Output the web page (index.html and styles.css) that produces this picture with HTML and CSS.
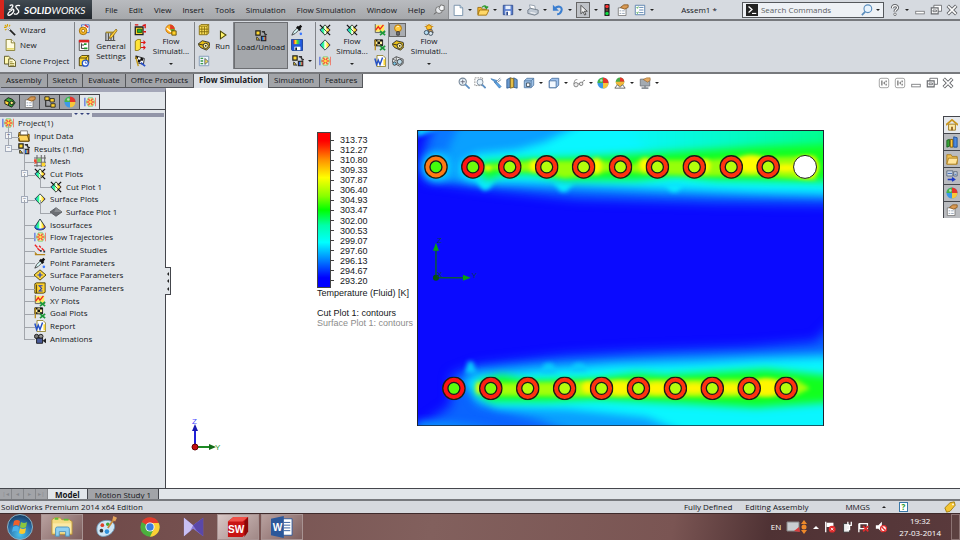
FILE: index.html
```html
<!DOCTYPE html>
<html lang="en">
<head>
  <meta charset="UTF-8">
  <meta name="viewport" content="width=device-width, initial-scale=1.0">
  <title>SolidWorks - Assem1</title>
  <link rel="stylesheet" href="styles.css">
</head>
<body>
  <svg class="sprite" aria-hidden="true">
    <defs>
      <linearGradient id="g-rainbow" x1="0" y1="0" x2="1" y2="0">
        <stop offset="0" stop-color="#e22"/><stop offset=".3" stop-color="#fd2"/><stop offset=".6" stop-color="#3d4"/><stop offset="1" stop-color="#26f"/>
      </linearGradient>
      <linearGradient id="g-rain2" x1="0" y1="0" x2="1" y2="0">
        <stop offset="0" stop-color="#19f"/><stop offset=".35" stop-color="#3f8"/><stop offset=".5" stop-color="#fff"/><stop offset=".75" stop-color="#fe3"/><stop offset="1" stop-color="#e33"/>
      </linearGradient>
    </defs>
    <symbol id="i-wand" viewBox="0 0 14 14"><path d="M5 5l8 8" stroke="#222" stroke-width="2"/><path d="M4 0v3M0 4h3M1 1l2 2M7 1L6 3M1 7l2-1" stroke="#d9a400" stroke-width="1.3"/><path d="M5 5l2 2" stroke="#fff" stroke-width="1.4"/></symbol>
    <symbol id="i-new" viewBox="0 0 14 14"><path d="M2.500.5h6l4 4v9h-10z" fill="#fffce0" stroke="#7d7320"/><path d="M8.500.5v4h4" fill="#fff" stroke="#7d7320"/><path d="M3.500 11.500h8" stroke="#e8dc70" stroke-width="2"/></symbol>
    <symbol id="i-clone" viewBox="0 0 14 14"><path d="M.5 1.500h5l3 3v6h-8z" fill="#fff8b0" stroke="#4c4512"/><path d="M5.500 4.500h5l3 3v6h-8z" fill="#fffbd0" stroke="#4c4512"/><path d="M7 8h3M7 10h5M7 12h5" stroke="#8c8020"/></symbol>
    <symbol id="i-gearpage" viewBox="0 0 14 14"><path d="M4 1h9v9H6z" fill="#fff" stroke="#3a64c4"/><circle cx="6" cy="8" r="4.500" fill="#f3b52a" stroke="#a06a00"/><circle cx="6" cy="8" r="1.700" fill="#fff" stroke="#a06a00"/><path d="M8 1l4 3" stroke="#d33" stroke-width="2"/></symbol>
    <symbol id="i-treepage" viewBox="0 0 14 14"><path d="M1.500 1.500h11v12h-11z" fill="#fff" stroke="#444"/><path d="M1 1h12v3H1z" fill="#d22"/><path d="M4 5v6h3M4 7h3" stroke="#222" fill="none"/><path d="M7 5h3v2H7zM7 10h4v2H7z" fill="#1a9a2a"/></symbol>
    <symbol id="i-cube" viewBox="0 0 14 14"><path d="M1.500 3.500l3-3h8v9l-3 3h-8z" fill="#ffd72e" stroke="#3d3200"/><path d="M1.500 3.500h8v9M9.500 3.500l3-3" fill="none" stroke="#3d3200"/><circle cx="8.500" cy="9.500" r="3.500" fill="#fff" stroke="#2455c8" stroke-width="1.500"/><path d="M8.500 7.500v2h2" stroke="#2455c8" fill="none"/></symbol>
    <symbol id="i-genset" viewBox="0 0 14 14"><path d="M1 4v9M4 4v9M7 4v9M10 4v9M0 13.500h12" stroke="#555" stroke-width="1.400"/><path d="M1 4h10" stroke="#a88e2c" stroke-width="2"/><path d="M13 0L6 8l-1 3 3-1 6-8z" fill="#ffcf3d" stroke="#7a5600" stroke-width=".8"/></symbol>
    <symbol id="i-greenbox" viewBox="0 0 14 14"><path d="M1.500 3.500h9v9h-9z" fill="#ffd72e" stroke="#222" stroke-width="1.500"/><path d="M4 6h5v4H4z" fill="#20b030" stroke="#145c18"/><path d="M1 1h4M10 2l3-1v4M11 9h3" stroke="#d11" stroke-width="1.600" fill="none"/></symbol>
    <symbol id="i-flowbox" viewBox="0 0 14 14"><path d="M1.500 2.500l3-2h3v11l-3 2h-3z" fill="#ffe338" stroke="#8a7200"/><path d="M8 4h5M8 10h5M11 2l2 2-2 2M11 8l2 2-2 2" stroke="#e21515" stroke-width="1.200" fill="none"/></symbol>
    <symbol id="i-flag" viewBox="0 0 14 14"><path d="M2 1l10 3-1 7-7-2" fill="#fff" stroke="#111"/><path d="M2 1l3 1-1 3-3-1zM8 3l3 1-1 3-3-1zM5 5l3 1-1 3-3-1z" fill="#111"/><path d="M2 2l3 11" stroke="#c59a16" stroke-width="1.600"/><path d="M8 9l5 4" stroke="#2950c8" stroke-width="2"/></symbol>
    <symbol id="i-flowsim" viewBox="0 0 14 14"><circle cx="6" cy="6" r="5" fill="#ffb52b" stroke="#c26a00"/><path d="M6 1a5 5 0 0 1 5 5H6z" fill="#e33a24"/><path d="M6 6h5a5 5 0 0 1-2 4z" fill="#3aa83a"/><path d="M8 8h5v5H8z" fill="#ffcf2a" stroke="#5e4900"/><path d="M2 5l5 4" stroke="#fff" stroke-width="1.400"/></symbol>
    <symbol id="i-grid" viewBox="0 0 14 14"><path d="M1.500 2.500l2-2h9v10l-2 2h-9z" fill="#ffe35a" stroke="#80680a"/><path d="M1.500 2.500h9v10M10.500 2.500l2-2M4.500 3v9M7.500 3v9M2 6h10M2 9h10" fill="none" stroke="#80680a"/></symbol>
    <symbol id="i-nut" viewBox="0 0 14 14"><path d="M0 6l5-4 8 2 1 5-4 4-7-3z" fill="#e8bf1a" stroke="#222"/><circle cx="9" cy="8" r="3" fill="#fff3a8" stroke="#222"/><circle cx="9" cy="8" r="1" fill="#222"/><path d="M1 6l5 1" stroke="#222"/></symbol>
    <symbol id="i-solve" viewBox="0 0 14 14"><path d="M1.500 1.500h11v11h-11z" fill="#eef5fb" stroke="#7a95b4"/><path d="M3 4h3M3 7h3M3 10h3" stroke="#3a9a48" stroke-width="1.500"/><path d="M8 4l4 3.500L8 11z" fill="#f3dc53" stroke="#54606c"/></symbol>
    <symbol id="i-run" viewBox="0 0 14 14"><path d="M4 2.500l6.500 4.500L4 11.500z" fill="#fff36a" stroke="#4b4500" stroke-width="1.200"/></symbol>
    <symbol id="i-load" viewBox="0 0 14 14"><path d="M1 1h5v5H1z" fill="#ffd72e" stroke="#222" stroke-width="1.400"/><path d="M8 2h3v3" fill="#e8e8e8" stroke="#333" stroke-width="1.400"/><path d="M8 2c3 0 4 1 4 4l2-1M6 12c-3 0-4-1-4-3" stroke="#333" fill="none" stroke-width="1.300"/><path d="M2 8l3 3-3 1z" fill="#ffd72e" stroke="#333"/><path d="M7.500 7.500h5v5h-5z" fill="#fff" stroke="#222" stroke-width="1.400"/><path d="M8 8h2v4H8z" fill="#2a5cdf"/><path d="M10 8h1v4h-1z" fill="#2bc83a"/><path d="M11 8h1v4h-1z" fill="#e22"/></symbol>
    <symbol id="i-dropper" viewBox="0 0 14 14"><path d="M1 13l2-4 5-5 2 2-5 5z" fill="#dff" stroke="#333"/><path d="M7 3l4 4M9 5l3-3" stroke="#111" stroke-width="3"/><circle cx="11.500" cy="11.500" r="1.500" fill="#3a78ff"/></symbol>
    <symbol id="i-disk" viewBox="0 0 14 14"><path d="M.5.5h13v13h-12l-1-1z" fill="#2058d8" stroke="#143a92"/><path d="M3 1h8v5H3z" fill="url(#g-rainbow)"/><path d="M4 9h7v4H4z" fill="#fff"/><path d="M5 10h2v3H5z" fill="#123"/></symbol>
    <symbol id="i-diamond" viewBox="0 0 14 14"><path d="M7 1l6 6-6 6-6-6z" fill="url(#g-rain2)" stroke="#234"/></symbol>
    <symbol id="i-cut" viewBox="0 0 14 14"><path d="M7 1l6 6-6 6-6-6z" fill="url(#g-rain2)" stroke="#222"/><path d="M1 1l4 4M13 1L9 5M9 9l4 4" stroke="#111" stroke-width="1.400" fill="none"/><path d="M5 5l4 4" stroke="#333"/></symbol>
    <symbol id="i-surf" viewBox="0 0 14 14"><path d="M7 2l7 5-7 5-7-5z" fill="#6b6e73" stroke="#55585c"/><path d="M7 2l7 5H5z" fill="#8a8d91"/></symbol>
    <symbol id="i-fan" viewBox="0 0 14 14"><path d="M1 2v10" stroke="#5a74dd" fill="none" stroke-width="1.500"/><path d="M5 2h5l3 5-3 5H5L2.500 7z" fill="#f7e58c" stroke="#7bd68b"/><path d="M5 3l5 8M10 3L5 11M3 7h9" stroke="#f25a3c" stroke-width="1.700"/><circle cx="7.500" cy="7" r="1.600" fill="#ffe23a"/><path d="M13.500 2v10" stroke="#f26a5a"/></symbol>
    <symbol id="i-folder" viewBox="0 0 14 14"><path d="M1 3h5l1 2h6v8H1z" fill="#f7b62a" stroke="#4f3500"/><path d="M3 1h8v5H3z" fill="#fff" stroke="#777"/><path d="M0 6h11l2 7H2z" fill="#ffd45c" stroke="#4f3500"/></symbol>
    <symbol id="i-mesh" viewBox="0 0 14 14"><path d="M3.500 0v14M8.500 0v14M12.500 0v14M0 3.500h14M0 8.500h14M0 12.500h14" stroke="#666" stroke-width="1.200"/><path d="M0 5h3v5H0z" fill="#f04a30"/><path d="M9 9h4v4H9z" fill="#ffd52e"/><path d="M4 4h4v4H4z" fill="#71d05a"/></symbol>
    <symbol id="i-iso" viewBox="0 0 14 14"><path d="M7 0l6 9c1 5-13 5-12 0z" fill="url(#g-rain2)" stroke="#123"/><path d="M1 9c2 3 10 3 12 0-1 5-11 5-12 0z" fill="#2046d8"/></symbol>
    <symbol id="i-particle" viewBox="0 0 14 14"><path d="M1 1l3 3M4 5l3 3M6 2l2 2M9 5l3 3" stroke="#e22" stroke-width="1.600"/><path d="M7 8h2M11 9h2" stroke="#234" stroke-width="2"/><path d="M1 12.500h12M1 10l2 2" stroke="#b5861e" stroke-width="1.500"/></symbol>
    <symbol id="i-sparam" viewBox="0 0 14 14"><path d="M7 1l7 6-7 6-7-6z" fill="#ffd93c" stroke="#3d3200"/><path d="M4 7h6M7 4v6" stroke="#1c3ac8" stroke-width="1.400"/></symbol>
    <symbol id="i-vparam" viewBox="0 0 14 14"><path d="M1 2l2-1h10v11l-2 1H1z" fill="#ffd22e" stroke="#3d3200"/><path d="M3 3v10" stroke="#3d3200"/><path d="M10 4.500H6l3 3-3 3h4" stroke="#1c3ac8" fill="none" stroke-width="1.200"/></symbol>
    <symbol id="i-xy" viewBox="0 0 14 14"><path d="M1 1h11v8H1z" fill="#ffe95e"/><path d="M1.500 0v10H13" stroke="#555" fill="none"/><path d="M2 7l3-4 2 3 4-5" stroke="#e22" fill="none" stroke-width="1.500"/><path d="M7 8l6 5M13 8l-6 5" stroke="#1d9a3a" stroke-width="2"/></symbol>
    <symbol id="i-goal" viewBox="0 0 14 14"><path d="M1 1h9v7H1z" fill="#fff2a0" stroke="#111"/><path d="M1 1h3v2H1zM7 1h3v2H7zM4 3h3v3H4zM1 6h3v2H1zM7 6h3v2H7z" fill="#111"/><path d="M1.500 1v12" stroke="#b58a14" stroke-width="1.500"/><path d="M7 8l6 5M13 8l-6 5" stroke="#1d9a3a" stroke-width="2"/></symbol>
    <symbol id="i-report" viewBox="0 0 14 14"><path d="M3.500.5h7l3 3v10h-10z" fill="#fff" stroke="#8a7a20"/><path d="M1 4l2 7 2-5 2 5 3-8" stroke="#2450c4" fill="none" stroke-width="1.700"/><path d="M12 5v7" stroke="#ffd93c" stroke-width="2"/></symbol>
    <symbol id="i-anim" viewBox="0 0 14 14"><circle cx="3" cy="4" r="2.500" fill="#777" stroke="#111"/><circle cx="8" cy="4" r="2.500" fill="#999" stroke="#111"/><path d="M3 6h7v6H3z" fill="#4b5d9a" stroke="#111"/><path d="M10 9l4-3v6z" fill="#222"/></symbol>
    <symbol id="i-bulb" viewBox="0 0 14 14"><circle cx="7" cy="5" r="4" fill="#ffc93c" stroke="#b06f00"/><path d="M5 4q1-2 3-1" stroke="#fff" fill="none"/><path d="M5.500 9h3v4h-3z" fill="#777" stroke="#333"/></symbol>
    <symbol id="i-wire" viewBox="0 0 14 14"><path d="M0 5l5-3 8 3v5l-4 3-8-4z" fill="#e7ebee" stroke="#444"/><circle cx="9" cy="8" r="3" fill="#bcd9e8" stroke="#333"/><path d="M1 5l5 2M5 2v4" stroke="#555"/><circle cx="3" cy="10" r="2" fill="#7cc7e8" stroke="#333"/></symbol>
    <symbol id="i-flowdisp" viewBox="0 0 14 14"><circle cx="7" cy="4" r="3" fill="#ffc22c" stroke="#b87300"/><path d="M7 0v1M2 3h2M10 3h2M3 0l1 1M11 0l-1 1" stroke="#c98500"/><path d="M6 7l4-1 2 4-5 2z" fill="#c7964e" stroke="#555"/><circle cx="4" cy="10" r="2.500" fill="#b5dcf2" stroke="#345"/><circle cx="9" cy="11" r="2.300" fill="#dce8ef" stroke="#345"/></symbol>
    <symbol id="i-pin" viewBox="0 0 14 14"><path d="M1 12l4-3" stroke="#555"/><circle cx="7" cy="7" r="4" fill="#e8eaed" stroke="#666"/><path d="M7 5l2-4 4 1v5l-4 1z" fill="#f4f5f7" stroke="#666"/></symbol>
    <symbol id="i-doc" viewBox="0 0 14 14"><path d="M2.500 1.500h7l3 3v9h-10z" fill="#fff" stroke="#6f8aa5"/><path d="M9.500 1.500v3h3" fill="#d9e7f4" stroke="#6f8aa5"/></symbol>
    <symbol id="i-open" viewBox="0 0 14 14"><path d="M1 4h4l1 2h5v6H1z" fill="#f5b62e" stroke="#9c6d0c"/><path d="M3 7h11l-3 6H1z" fill="#ffd868" stroke="#9c6d0c"/><path d="M6 4c2-3 5-2 5 0M9 3l2 2 2-2" stroke="#2a9a2a" stroke-width="1.500" fill="none"/></symbol>
    <symbol id="i-files" viewBox="0 0 14 14"><path d="M1 2h5l1 2h6v9H1z" fill="#f0c050" stroke="#a87c20"/><path d="M3 6h11l-2 7H1z" fill="#ffe49a" stroke="#a87c20"/></symbol>
    <symbol id="i-save" viewBox="0 0 14 14"><path d="M1.500 1.500h11v11h-11z" fill="#5b7fcf" stroke="#2d4b8e"/><path d="M4 2h6v4H4z" fill="#e8f0fc"/><path d="M4 8h6v5H4z" fill="#fff"/><path d="M5 9h2v4H5z" fill="#2d4b8e"/></symbol>
    <symbol id="i-print" viewBox="0 0 14 14"><path d="M3 1l6 1 1 5-6-1z" fill="#fff" stroke="#8c98a6"/><path d="M1 7l3-2 9 2v4l-4 2-8-2z" fill="#bfc8d3" stroke="#6c7784"/><path d="M4 10l6 1" stroke="#fff"/></symbol>
    <symbol id="i-undo" viewBox="0 0 14 14"><path d="M3 6c3-5 10-3 8 2-.7 2-3 4-5 4" stroke="#3c7fd0" stroke-width="2.400" fill="none"/><path d="M1 1v7h7z" fill="#3c7fd0"/></symbol>
    <symbol id="i-arrow" viewBox="0 0 14 14"><path d="M4.500 1.500v10l2.500-2.500 2 4 1.500-1-2-3.500h3.500z" fill="#eee" stroke="#444"/></symbol>
    <symbol id="i-light" viewBox="0 0 14 14"><rect x="4" y="0" width="6" height="14" rx="1" fill="#222"/><circle cx="7" cy="3" r="2" fill="#f33"/><circle cx="7" cy="7" r="1.500" fill="#643"/><circle cx="7" cy="11" r="2" fill="#1d4"/></symbol>
    <symbol id="i-prop" viewBox="0 0 14 14"><path d="M1.500 4.500h9v9h-9z" fill="#fff" stroke="#777"/><path d="M3 8h2M3 11h2M6 8h3M6 11h3" stroke="#8a9ab0"/><path d="M4 4l4-3h5v3l-4 2z" fill="#d99a54" stroke="#8a5a22"/></symbol>
    <symbol id="i-list" viewBox="0 0 14 14"><path d="M1.500 1.500h11v11h-11z" fill="#fff" stroke="#4f7aa8"/><path d="M3 4l1 1 1-2M3 10l1 1 1-2" stroke="#2a9a2a" fill="none"/><path d="M6 4h5M6 7h5M6 10h5" stroke="#4f7aa8"/></symbol>
    <symbol id="i-mag" viewBox="0 0 14 14"><circle cx="5.500" cy="5.500" r="4.200" fill="#eaf4fb" stroke="#778899" stroke-width="1.300"/><path d="M8.500 8.500l5 5" stroke="#5b8fc4" stroke-width="2"/><path d="M5.500 3v5M3 5.500h5" stroke="#667"/></symbol>
    <symbol id="i-magarea" viewBox="0 0 14 14"><path d="M1 1h9v9H1z" fill="none" stroke="#888" stroke-dasharray="2 1"/><circle cx="7" cy="6" r="3.500" fill="#eaf4fb" stroke="#778899"/><path d="M9.500 9l4 4" stroke="#5b8fc4" stroke-width="2"/></symbol>
    <symbol id="i-find" viewBox="0 0 14 14"><circle cx="8" cy="5.500" r="4.500" fill="#e8f3fd" stroke="#5a8dbd" stroke-width="1.300"/><path d="M5 9l-4 4" stroke="#5a8dbd" stroke-width="2"/></symbol>
    <symbol id="i-prev" viewBox="0 0 14 14"><path d="M1 2l7 2-1 3zM5 6l6 7 2-2-6-6z" fill="#5ea4e4" stroke="#2c6cab" stroke-width=".7"/><path d="M8 5l4-4M9 6l4-3" stroke="#789"/></symbol>
    <symbol id="i-section" viewBox="0 0 14 14"><path d="M1 3l4-2v11l-4 1zM9 1l4 2v10l-4-1z" fill="#6c9bd0" stroke="#2f5c92"/><path d="M5 1l4 1v10l-4 1z" fill="#e5bf48" stroke="#776022"/></symbol>
    <symbol id="i-view" viewBox="0 0 14 14"><path d="M1.500 4.500l3-3h8v8l-3 3h-8z" fill="#9fc2e6" stroke="#547ba5"/><path d="M1.500 4.500h8v8M9.500 4.500l3-3" stroke="#547ba5" fill="none"/><path d="M4 7h4v4H4z" fill="#fff" stroke="#345"/></symbol>
    <symbol id="i-box" viewBox="0 0 14 14"><path d="M1.500 4.500l3-3h8v8l-3 3h-8z" fill="#9fc2ee" stroke="#4b73a2"/><path d="M1.500 4.500h8v8h-8z" fill="#f2f8ff" stroke="#4b73a2"/></symbol>
    <symbol id="i-glasses" viewBox="0 0 14 14"><circle cx="3.500" cy="9" r="2.500" fill="#eee" stroke="#777"/><circle cx="9.500" cy="8" r="2" fill="#eee" stroke="#777"/><path d="M1 8c1-5 2-5 4-5M6 8h2M11 7c1-3 1-3 3-3" stroke="#777" fill="none"/></symbol>
    <symbol id="i-ball" viewBox="0 0 14 14"><circle cx="7" cy="7" r="6.500" fill="#3c9ae8"/><path d="M7 .5a6.500 6.500 0 0 1 6.500 6.500H7z" fill="#e5352b"/><path d="M7 .5A6.500 6.500 0 0 0 .5 7H7z" fill="#45b649"/><path d="M13.500 7A6.500 6.500 0 0 1 7 13.500V7z" fill="#f7c63a"/><circle cx="5" cy="4" r="1.500" fill="#fff" opacity=".6"/></symbol>
    <symbol id="i-scene" viewBox="0 0 14 14"><circle cx="7" cy="5.500" r="5" fill="#49a84a"/><path d="M7 .5a5 5 0 0 1 5 5H7z" fill="#e5352b"/><path d="M12 5.500a5 5 0 0 1-10 0z" fill="#f2b83a"/><path d="M1 13l3-4 3 3 3-3 3 4z" fill="#fff" stroke="#555"/></symbol>
    <symbol id="i-monitor" viewBox="0 0 14 14"><path d="M1.500 2.500h11v8h-11z" fill="#a4abb2" stroke="#70767c"/><path d="M3 13h8M7 10v3" stroke="#8a9096" stroke-width="2"/><path d="M5 3l4-2h4v3l-3 2z" fill="#e5aa62" stroke="#8a5a22" stroke-width=".6"/></symbol>
    <symbol id="i-min" viewBox="0 0 14 14"><rect x="2" y="8.500" width="10" height="3" fill="#fff" stroke="#77797c"/></symbol>
    <symbol id="i-restore" viewBox="0 0 14 14"><path d="M4.500 1.500h9v7h-9z" fill="#fff" stroke="#66686c"/><path d="M1.500 4.500h8v7h-8z" fill="#fff" stroke="#66686c" stroke-width="1.300"/><path d="M3.500 7h4v2h-4z" fill="none" stroke="#66686c"/></symbol>
    <symbol id="i-close" viewBox="0 0 14 14"><path d="M2 2l10 10M12 2L2 12" stroke="#66686c" stroke-width="4"/><path d="M2.500 2.500l9 9M11.500 2.500l-9 9" stroke="#fff" stroke-width="1.800"/></symbol>
    <symbol id="i-pane" viewBox="0 0 14 14"><rect x="1.500" y="1.500" width="11" height="11" rx="2" fill="#fff" stroke="#999"/><path d="M4.500 4v6M9.500 4v2M9.500 8v2" stroke="#777" stroke-width="1.500"/><path d="M6 7l2-2v4z" fill="#777"/></symbol>
    <symbol id="i-help" viewBox="0 0 14 14"><path d="M4 5c0-4 6-4 6-.5 0 2-3 2-3 4.500" stroke="#66686c" stroke-width="3.600" fill="none"/><path d="M4 5c0-4 6-4 6-.5 0 2-3 2-3 4.500" stroke="#fff" stroke-width="1.300" fill="none"/><circle cx="7" cy="12" r="1.500" fill="#fff" stroke="#66686c"/></symbol>
    <symbol id="i-prompt" viewBox="0 0 14 14"><rect width="14" height="14" fill="#222"/><path d="M3 3l4 3.500L3 10" stroke="#fff" fill="none" stroke-width="1.500"/><path d="M7 11h5" stroke="#fff" stroke-width="1.300"/></symbol>
    <symbol id="i-asm" viewBox="0 0 14 14"><path d="M1 5l4-3 5 2 3 4-4 5-4-2z" fill="#37a836" stroke="#111"/><path d="M1 5l5 2-1 4-4-2z" fill="#ffd93c" stroke="#111"/><circle cx="9" cy="8" r="2" fill="#ffe980" stroke="#111"/></symbol>
    <symbol id="i-config" viewBox="0 0 14 14"><path d="M2 1v11h6M2 5h6" stroke="#222" fill="none" stroke-width="1.200"/><path d="M1 1h5v4H1zM7 3h5v4H7zM8 9h5v4H8z" fill="#ffd22e" stroke="#222"/></symbol>
    <symbol id="i-home" viewBox="0 0 14 14"><path d="M3 6h8v7H3z" fill="#ffe9a0" stroke="#94701c"/><path d="M0 7l7-6 7 6" fill="none" stroke="#c9951c" stroke-width="2"/><path d="M6 9h2v4H6z" fill="#8a5a22"/></symbol>
    <symbol id="i-books" viewBox="0 0 14 14"><path d="M1 5l3-1v8l-3 1z" fill="#3aa83a" stroke="#145c18"/><path d="M5 4h3v9H5z" fill="#ffc93c" stroke="#7a5600"/><path d="M9 1l4 1v11H9z" fill="#4d8ae0" stroke="#1c4c92"/></symbol>
    <symbol id="i-palette" viewBox="0 0 14 14"><path d="M1 1h7v6H1zM9 2h4v5H9z" fill="#cfdae8" stroke="#56657a"/><path d="M2 4h5M10 5h2" stroke="#2c5cae"/><path d="M2 11h7M7 9l3 2-3 2" stroke="#1c3ac8" fill="none" stroke-width="1.700"/></symbol>
    <symbol id="i-ring" viewBox="-12 -12 24 24"><circle r="8.700" fill="none" stroke="currentColor" stroke-width="5.400"/><circle r="11.200" fill="none" stroke="#182018" stroke-width="1.300"/><circle r="6" fill="inherit" stroke="#182018" stroke-width="1.300"/></symbol>
  </svg>

  <header class="titlebar">
    <div class="brand">
      <svg class="ds" viewBox="0 0 16 16"><path d="M3 3c4-2 5 0 2 3M2 8c5-3 8 0 4 4-2 2-5 3-5 1 0-2 3-4 5-5M15 3c-5-1-6 1-4 3s4 4 1 6c-1 1-3 1-4 0" fill="none" stroke="#fff" stroke-width="1.500"/></svg>
      <span><b>SOLID</b>WORKS</span>
    </div>
    <nav class="menu">
      <a href="#">File</a><a href="#">Edit</a><a href="#">View</a><a href="#">Insert</a><a href="#">Tools</a><a href="#">Simulation</a><a href="#">Flow Simulation</a><a href="#">Window</a><a href="#">Help</a>
      <button class="ico" aria-label="Pin menu"><svg><use href="#i-pin"/></svg></button>
    </nav>
    <div class="quick">
      <button class="ico drop" aria-label="New"><svg><use href="#i-doc"/></svg></button>
      <button class="ico drop" aria-label="Open"><svg><use href="#i-open"/></svg></button>
      <button class="ico drop" aria-label="Save"><svg><use href="#i-save"/></svg></button>
      <button class="ico drop" aria-label="Print"><svg><use href="#i-print"/></svg></button>
      <button class="ico drop" aria-label="Undo"><svg><use href="#i-undo"/></svg></button>
      <button class="ico drop select" aria-label="Select"><svg><use href="#i-arrow"/></svg></button>
      <button class="ico" aria-label="Rebuild"><svg><use href="#i-light"/></svg></button>
      <button class="ico" aria-label="File properties"><svg><use href="#i-prop"/></svg></button>
      <button class="ico drop" aria-label="Options"><svg><use href="#i-list"/></svg></button>
    </div>
    <span class="doc-name">Assem1 *</span>
    <label class="search">
      <svg><use href="#i-prompt"/></svg>
      <input type="text" placeholder="Search Commands" aria-label="Search Commands">
      <svg class="find"><use href="#i-find"/></svg><i class="caret"></i>
    </label>
    <div class="win">
      <button class="ico drop" aria-label="Help"><svg><use href="#i-help"/></svg></button>
      <button class="ico" aria-label="Minimize"><svg><use href="#i-min"/></svg></button>
      <button class="ico" aria-label="Restore"><svg><use href="#i-restore"/></svg></button>
      <button class="ico" aria-label="Close"><svg><use href="#i-close"/></svg></button>
    </div>
  </header>

  <section class="ribbon">
    <div class="group wizard">
      <button><svg><use href="#i-wand"/></svg>Wizard</button>
      <button><svg><use href="#i-new"/></svg>New</button>
      <button><svg><use href="#i-clone"/></svg>Clone Project</button>
    </div>
    <div class="group">
      <div class="col">
        <button class="ico" aria-label="Computational domain"><svg><use href="#i-gearpage"/></svg></button>
        <button class="ico" aria-label="Customize tree"><svg><use href="#i-treepage"/></svg></button>
        <button class="ico" aria-label="Engineering database"><svg><use href="#i-cube"/></svg></button>
      </div>
      <button class="big small"><svg><use href="#i-genset"/></svg>General<br>Settings</button>
    </div>
    <div class="group">
      <div class="col">
        <button class="ico" aria-label="Boundary"><svg><use href="#i-greenbox"/></svg></button>
        <button class="ico" aria-label="Fan"><svg><use href="#i-flowbox"/></svg></button>
        <button class="ico" aria-label="Goals"><svg><use href="#i-flag"/></svg></button>
      </div>
      <button class="big top"><svg><use href="#i-flowsim"/></svg>Flow<br>Simulati...<i class="caret"></i></button>
    </div>
    <div class="group">
      <div class="col">
        <button class="ico" aria-label="Mesh"><svg><use href="#i-grid"/></svg></button>
        <button class="ico" aria-label="Geometry"><svg><use href="#i-nut"/></svg></button>
        <button class="ico" aria-label="Solver"><svg><use href="#i-solve"/></svg></button>
      </div>
      <button class="big run"><svg><use href="#i-run"/></svg>Run</button>
    </div>
    <div class="group">
      <button class="big load"><svg><use href="#i-load"/></svg>Load/Unload</button>
      <div class="col">
        <button class="ico" aria-label="Probe"><svg><use href="#i-dropper"/></svg></button>
        <button class="ico" aria-label="Save image"><svg><use href="#i-disk"/></svg></button>
        <button class="ico drop" aria-label="Load results"><svg><use href="#i-load"/></svg></button>
      </div>
    </div>
    <div class="group">
      <div class="col">
        <button class="ico" aria-label="Cut plot"><svg><use href="#i-cut"/></svg></button>
        <button class="ico" aria-label="Surface plot"><svg><use href="#i-diamond"/></svg></button>
        <button class="ico" aria-label="Flow trajectories"><svg><use href="#i-fan"/></svg></button>
      </div>
      <button class="big small top"><svg><use href="#i-cut"/></svg>Flow<br>Simula...<i class="caret"></i></button>
      <div class="col">
        <button class="ico" aria-label="XY plot"><svg><use href="#i-xy"/></svg></button>
        <button class="ico" aria-label="Goal plot"><svg><use href="#i-goal"/></svg></button>
        <button class="ico" aria-label="Report"><svg><use href="#i-report"/></svg></button>
      </div>
    </div>
    <div class="group">
      <div class="col">
        <button class="ico on" aria-label="Lighting"><svg><use href="#i-bulb"/></svg></button>
        <button class="ico" aria-label="Display geometry"><svg><use href="#i-nut"/></svg></button>
        <button class="ico" aria-label="Transparency"><svg><use href="#i-wire"/></svg></button>
      </div>
      <button class="big top"><svg><use href="#i-flowdisp"/></svg>Flow<br>Simulati...<i class="caret"></i></button>
    </div>
  </section>

  <div class="tabrow">
    <nav class="tabs">
      <a href="#">Assembly</a><a href="#">Sketch</a><a href="#">Evaluate</a><a href="#">Office Products</a><a href="#" class="active">Flow Simulation</a><a href="#">Simulation</a><a href="#">Features</a>
    </nav>
    <div class="hud">
      <button class="ico" aria-label="Zoom to fit"><svg><use href="#i-mag"/></svg></button>
      <button class="ico" aria-label="Zoom to area"><svg><use href="#i-magarea"/></svg></button>
      <button class="ico" aria-label="Previous view"><svg><use href="#i-prev"/></svg></button>
      <button class="ico" aria-label="Section view"><svg><use href="#i-section"/></svg></button>
      <button class="ico drop" aria-label="View orientation"><svg><use href="#i-view"/></svg></button>
      <button class="ico drop" aria-label="Display style"><svg><use href="#i-box"/></svg></button>
      <button class="ico drop" aria-label="Hide or show"><svg><use href="#i-glasses"/></svg></button>
      <button class="ico" aria-label="Appearance"><svg><use href="#i-ball"/></svg></button>
      <button class="ico drop" aria-label="Scene"><svg><use href="#i-scene"/></svg></button>
      <button class="ico drop" aria-label="View settings"><svg><use href="#i-monitor"/></svg></button>
    </div>
    <div class="hud docwin">
      <button class="ico" aria-label="Expand left"><svg><use href="#i-pane"/></svg></button>
      <button class="ico" aria-label="Expand right"><svg><use href="#i-pane"/></svg></button>
      <button class="ico" aria-label="Minimize document"><svg><use href="#i-min"/></svg></button>
      <button class="ico" aria-label="Restore document"><svg><use href="#i-restore"/></svg></button>
      <button class="ico" aria-label="Close document"><svg><use href="#i-close"/></svg></button>
    </div>
  </div>

  <main>
    <aside class="panel">
      <div class="fm-tabs">
        <button aria-label="Feature tree"><svg><use href="#i-asm"/></svg></button>
        <button aria-label="Properties"><svg><use href="#i-prop"/></svg></button>
        <button aria-label="Configurations"><svg><use href="#i-config"/></svg></button>
        <button aria-label="Display"><svg><use href="#i-ball"/></svg></button>
        <button class="active" aria-label="Flow Simulation"><svg><use href="#i-fan"/></svg></button>
      </div>
      <div class="splitter"><span><i></i><i></i><i></i></span></div>
      <ul class="tree">
        <li><svg><use href="#i-fan"/></svg>Project(1)</li>
        <li class="d1"><button class="tog" aria-label="Expand">+</button><svg><use href="#i-folder"/></svg>Input Data</li>
        <li class="d1"><button class="tog" aria-label="Collapse">−</button><svg><use href="#i-load"/></svg>Results (1.fld)</li>
        <li class="d2"><svg><use href="#i-mesh"/></svg>Mesh</li>
        <li class="d2"><button class="tog" aria-label="Collapse">−</button><svg><use href="#i-cut"/></svg>Cut Plots</li>
        <li class="d3"><svg><use href="#i-cut"/></svg>Cut Plot 1</li>
        <li class="d2"><button class="tog" aria-label="Collapse">−</button><svg><use href="#i-diamond"/></svg>Surface Plots</li>
        <li class="d3"><svg><use href="#i-surf"/></svg>Surface Plot 1</li>
        <li class="d2"><svg><use href="#i-iso"/></svg>Isosurfaces</li>
        <li class="d2"><svg><use href="#i-fan"/></svg>Flow Trajectories</li>
        <li class="d2"><svg><use href="#i-particle"/></svg>Particle Studies</li>
        <li class="d2"><svg><use href="#i-dropper"/></svg>Point Parameters</li>
        <li class="d2"><svg><use href="#i-sparam"/></svg>Surface Parameters</li>
        <li class="d2"><svg><use href="#i-vparam"/></svg>Volume Parameters</li>
        <li class="d2"><svg><use href="#i-xy"/></svg>XY Plots</li>
        <li class="d2"><svg><use href="#i-goal"/></svg>Goal Plots</li>
        <li class="d2"><svg><use href="#i-report"/></svg>Report</li>
        <li class="d2"><svg><use href="#i-anim"/></svg>Animations</li>
      </ul>
      <div class="handle"><i></i><i></i><i></i></div>
    </aside>

    <section class="viewport">
      <div class="legend">
        <div class="scale">
          <div class="bar"></div>
          <ol>
            <li>313.73</li><li>312.27</li><li>310.80</li><li>309.33</li><li>307.87</li><li>306.40</li><li>304.93</li><li>303.47</li><li>302.00</li><li>300.53</li><li>299.07</li><li>297.60</li><li>296.13</li><li>294.67</li><li>293.20</li>
          </ol>
        </div>
        <p>Temperature (Fluid) [K]</p>
        <p class="first">Cut Plot 1: contours</p>
        <p class="dim">Surface Plot 1: contours</p>
      </div>

      <svg class="plot" viewBox="0 0 408 297">
        <defs>
          <filter id="b2" x="-40%" y="-60%" width="180%" height="220%" color-interpolation-filters="sRGB"><feGaussianBlur stdDeviation="2"/></filter>
          <filter id="b4" x="-20%" y="-60%" width="140%" height="220%" color-interpolation-filters="sRGB"><feGaussianBlur stdDeviation="4"/></filter>
          <filter id="b7" x="-20%" y="-60%" width="140%" height="220%" color-interpolation-filters="sRGB"><feGaussianBlur stdDeviation="6"/></filter>
          <linearGradient id="teal" x1="0" x2="1" y1="0" y2="0">
            <stop offset="0" stop-color="#00ff9c" stop-opacity="0"/><stop offset="1" stop-color="#00ff80"/>
          </linearGradient>
          <clipPath id="frame"><rect width="408" height="297"/></clipPath>
        </defs>
        <g clip-path="url(#frame)">
          <rect width="408" height="297" fill="#0a0aff"/>
          <!-- upper flow band -->
          <path d="M20-20H430V74L300 72 160 68 80 60 8 50 4 30z" fill="#0a78ff" filter="url(#b7)"/>
          <path d="M44-10H430V66L260 62 120 56 20 50 12 44V28L30 22z" fill="#0aa0ff" filter="url(#b4)"/>
          <path d="M0-4h28l-20 8-8 3z" fill="#0ad0ff" filter="url(#b2)"/>
          <circle cx="19" cy="37" r="14" fill="#0ad8ff" filter="url(#b4)"/>
          <path d="M430-20V64L340 62 240 58 150 54 100 52 56 52 44 46V32L60 24 100 20 128 12 160-4 175-20z" fill="#0af6ff" filter="url(#b4)"/>
          <path d="M58 48l5 9 4 4 6-2 6-11zM136 52l8 10h6l8-10zM248 54l7 8h6l6-8z" fill="#0ae8ff" filter="url(#b2)"/>
          <path d="M200-10H430V30H240z" fill="url(#teal)" filter="url(#b4)"/>
          <path d="M64 32L110 29 170 27 220 24 290 20 340 17 430 14V52L300 50 260 46 220 50 150 50 115 44 86 44 70 50 62 42z" fill="#12ff1e" filter="url(#b4)"/>
          <path d="M74 35L116 31 186 31 215 35 225 30 290 30 320 28 400 26V50L340 46 290 46 230 44 200 40 180 44 148 48 120 42 78 40z" fill="#96ff0a" filter="url(#b2)"/>
          <g fill="#fffb00" filter="url(#b2)">
            <ellipse cx="71" cy="38" rx="5" ry="3"/><ellipse cx="118" cy="36" rx="5" ry="6"/><ellipse cx="180" cy="36" rx="5" ry="8"/><ellipse cx="229" cy="35" rx="6" ry="7"/><ellipse cx="289" cy="36" rx="5" ry="7"/><ellipse cx="335" cy="34" rx="16" ry="9"/><ellipse cx="370" cy="38" rx="12" ry="4"/><ellipse cx="390" cy="37" rx="13" ry="11"/>
          </g>
          <!-- lower flow band -->
          <path d="M34 246L60 236 150 226 220 222 330 218 400 212 430 180V320H0V300L34 276z" fill="#0a64ff" filter="url(#b7)"/>
          <path d="M44 250L60 240 130 234 250 228 430 222V320H200L120 290 60 276z" fill="#0aa0ff" filter="url(#b4)"/>
          <path d="M0 304v-12q60 2 90 12z" fill="#0a96ff" filter="url(#b4)"/>
          <path d="M50 252L64 246 80 246 130 241 200 236 280 234 340 231 430 228V330H330L230 288 150 280 80 278 60 268z" fill="#0af6ff" filter="url(#b4)"/>
          <path d="M48 244l3-12h5l4 12zM124 244l4-10h8l4 10zM154 242l4-8h8l5 8z" fill="#0ac8ff" filter="url(#b2)"/>
          <path d="M62 252L84 246 110 251 180 249 220 244 250 246 280 244 350 240 430 248V272L340 278 270 274 180 270 130 272 74 272 60 264z" fill="#12ff1e" filter="url(#b4)"/>
          <path d="M60 254L140 253 200 250 300 250 380 250 394 259 380 266 300 268 140 267 68 266z" fill="#a4ff0a" filter="url(#b2)"/>
          <g fill="#fff600" filter="url(#b2)">
            <ellipse cx="62" cy="259" rx="3" ry="6"/><ellipse cx="172" cy="258" rx="7" ry="6"/><ellipse cx="204" cy="259" rx="15" ry="7"/><ellipse cx="241" cy="259" rx="14" ry="6"/><ellipse cx="278" cy="259" rx="13" ry="5"/><ellipse cx="315" cy="259" rx="12" ry="5"/><ellipse cx="350" cy="258" rx="15" ry="9"/>
          </g>
        </g>
        <rect x=".5" y=".5" width="407" height="296" fill="none" stroke="#1c2430"/>
        <g class="rings">
          <use href="#i-ring" x="7" y="25" width="24" height="24" color="#ff7a14" fill="#42ff0c"/>
          <use href="#i-ring" x="44" y="25" width="24" height="24" color="#ff1414" fill="#6cff0c"/>
          <use href="#i-ring" x="81" y="25" width="24" height="24" color="#ff2814" fill="#9cff0c"/>
          <use href="#i-ring" x="118" y="25" width="24" height="24"/>
          <use href="#i-ring" x="155" y="25" width="24" height="24"/>
          <use href="#i-ring" x="192" y="25" width="24" height="24"/>
          <use href="#i-ring" x="229" y="25" width="24" height="24"/>
          <use href="#i-ring" x="266" y="25" width="24" height="24"/>
          <use href="#i-ring" x="303" y="25" width="24" height="24"/>
          <use href="#i-ring" x="340" y="25" width="24" height="24"/>
          <circle cx="389" cy="37" r="11.500" fill="#fff" stroke="#182018"/>
          <use href="#i-ring" x="25" y="247" width="24" height="24" color="#ff1414" fill="#58ff0c"/>
          <use href="#i-ring" x="62" y="247" width="24" height="24" color="#ff2014" fill="#80ff0c"/>
          <use href="#i-ring" x="99" y="247" width="24" height="24"/>
          <use href="#i-ring" x="136" y="247" width="24" height="24"/>
          <use href="#i-ring" x="173" y="247" width="24" height="24"/>
          <use href="#i-ring" x="210" y="247" width="24" height="24"/>
          <use href="#i-ring" x="247" y="247" width="24" height="24"/>
          <use href="#i-ring" x="284" y="247" width="24" height="24"/>
          <use href="#i-ring" x="321" y="247" width="24" height="24"/>
          <use href="#i-ring" x="358" y="247" width="24" height="24"/>
        </g>
        <g class="origin">
          <path d="M19 148v-30M19 148h29" stroke="#0b5a3c" stroke-width="1.500"/>
          <path d="M16 121l3-8 3 8zM46 145l8 3-8 3z" fill="#08a010"/>
          <circle cx="19" cy="148" r="3" fill="#064e14"/>
          <text x="20" y="113">Z</text><text x="55" y="148">Y</text><text x="20" y="147">X</text>
        </g>
      </svg>

      <svg class="triad" viewBox="0 0 34 38">
        <path d="M8 30V12" stroke="#2020d8" stroke-width="2"/><path d="M5 14l3-7 3 7z" fill="#1818b0"/>
        <path d="M8 30h16" stroke="#1c8a24" stroke-width="2"/><path d="M22 27l7 3-7 3z" fill="#126c18"/>
        <circle cx="8" cy="30" r="3" fill="#c01010" stroke="#600"/>
        <text x="5" y="7" fill="#4848ff">Z</text><text x="28" y="33" fill="#2a9a30">Y</text>
      </svg>

      <div class="taskpane">
        <button aria-label="Resources"><svg><use href="#i-home"/></svg></button>
        <button aria-label="Design library"><svg><use href="#i-books"/></svg></button>
        <button aria-label="File explorer"><svg><use href="#i-files"/></svg></button>
        <button aria-label="View palette"><svg><use href="#i-palette"/></svg></button>
        <button aria-label="Appearances"><svg><use href="#i-ball"/></svg></button>
        <button aria-label="Custom properties"><svg><use href="#i-prop"/></svg></button>
      </div>
    </section>
  </main>

  <div class="sheets">
    <button class="nav" aria-label="First">|◂</button><button class="nav" aria-label="Previous">◂</button><button class="nav" aria-label="Next">▸</button><button class="nav" aria-label="Last">▸|</button>
    <button class="active">Model</button><button>Motion Study 1</button>
  </div>

  <footer class="status">
    <span class="edition">SolidWorks Premium 2014 x64 Edition</span>
    <span>Fully Defined</span>
    <span>Editing Assembly</span>
    <span class="units">MMGS <i class="caret up"></i></span>
    <span class="q">?</span>
    <svg viewBox="0 0 14 14"><path d="M1 8l6-6 5-1 1 4-6 7-4 1z" fill="#f4c430" stroke="#9c7a0c"/><circle cx="10.500" cy="4" r="1" fill="#fff"/></svg>
  </footer>

  <footer class="taskbar">
    <button class="start" aria-label="Start"><svg viewBox="0 0 26 26"><defs><radialGradient id="orb" cx=".5" cy=".8" r=".8"><stop offset="0" stop-color="#4cc4ee"/><stop offset=".6" stop-color="#2a6ea8"/><stop offset="1" stop-color="#163a5e"/></radialGradient></defs><circle cx="13" cy="13" r="12.500" fill="url(#orb)" stroke="#8ab4c8"/><path d="M7 7q3-2 6 0l-1 5q-3-2-6 0z" fill="#f0602a"/><path d="M14 8q3 2 6 0l-1 5q-3 2-6 0z" fill="#8cc63e"/><path d="M6 13q3-2 6 0l-1 5q-3-2-6 0z" fill="#4ab0ea"/><path d="M13 14q3 2 6 0l-1 5q-3 2-6 0z" fill="#fcc92e"/></svg></button>
    <button class="open" aria-label="Explorer"><svg viewBox="0 0 24 24"><path d="M1 4l3-2h6l2 2h8l3 2v14H1z" fill="#f5dc83" stroke="#b8923c"/><path d="M4 3h4M14 4h5" stroke="#5cbf3a" stroke-width="2"/><path d="M2 8h20v10H2z" fill="#fbe9a6"/><path d="M5 22v-8q0-2 2-2h11q2 0 2 2v8h-4v-5H9v5z" fill="#8fd0f2" stroke="#4c93be"/></svg></button>
    <button aria-label="Paint"><svg viewBox="0 0 24 24"><path d="M2 14C2 7 9 4 15 5s8 6 5 11-9 7-13 6-5-4-5-8z" fill="#cfe6f5" stroke="#6d9cbc"/><circle cx="8" cy="10" r="2" fill="#e0402a"/><circle cx="14" cy="9" r="2" fill="#3fa83c"/><circle cx="7" cy="16" r="2" fill="#333"/><circle cx="13" cy="17" r="2.500" fill="#2f8fd8"/><path d="M14 13L21 3" stroke="#c78b3c" stroke-width="2"/><path d="M19 4l1-4 4 2-2 4z" fill="#e4a45a"/></svg></button>
    <button aria-label="Chrome"><svg viewBox="0 0 24 24"><circle cx="12" cy="12" r="10.500" fill="#4caf3e"/><path d="M12 12L3 6.500a10.500 10.500 0 0 1 18.500 1H12z" fill="#e23c2e"/><path d="M12 22.500A10.500 10.500 0 0 0 21.500 7.500H12l4 7z" fill="#fbd035"/><circle cx="12" cy="12" r="5" fill="#fff"/><circle cx="12" cy="12" r="4" fill="#3b7ddd"/></svg></button>
    <button aria-label="Player"><svg viewBox="0 0 24 24"><path d="M1 2l10 8 11-8v20l-11-8-10 8z" fill="#8b7bd8"/><path d="M1 2l10 8-3 6-7 6z" fill="#c9c0f4"/><path d="M22 2L11 10l4 6 7 6z" fill="#5a48a8"/></svg></button>
    <button class="open current" aria-label="SolidWorks"><svg viewBox="0 0 24 24"><path d="M1 6l6-5h16v16l-6 6H1z" fill="#c81414"/><path d="M1 6l6-5h16l-6 5z" fill="#f05048"/><path d="M19 6l4-5v16l-4 6z" fill="#8c0808"/><text x="1" y="19">SW</text></svg></button>
    <button class="open" aria-label="Word"><svg viewBox="0 0 24 24"><path d="M10 3h13v18H10z" fill="#fff" stroke="#2b579a"/><path d="M14 7h7M14 10h7M14 13h7M14 16h7" stroke="#2b579a"/><path d="M0 3l14-3v24L0 21z" fill="#2b579a"/><text x="2" y="16">W</text></svg></button>
    <div class="tray">
      <span class="lang">EN</span>
      <svg class="wide" viewBox="0 0 22 14"><path d="M1 2h12v9H1z" fill="#c9cdd0" stroke="#888"/><path d="M8 11l5-4 1 5z" fill="#d83c3c"/><path d="M15 4l3-4 3 4zM15 10l3 4 3-4z" fill="#f08a2a"/><circle cx="18" cy="7" r="2.500" fill="#f08a2a"/></svg>
      <i class="caret up"></i>
      <svg viewBox="0 0 14 14"><path d="M2 1v12" stroke="#fff" stroke-width="1.500"/><path d="M3 2h8v5H3z" fill="#fff"/><circle cx="9.500" cy="9.500" r="4" fill="#e22c2c"/><path d="M8 8l3 3M11 8l-3 3" stroke="#fff"/></svg>
      <svg viewBox="0 0 14 14"><path d="M3 3h7v10H3z" fill="#eee" stroke="#333"/><path d="M8 1v4h4V1M10 5v5H7" stroke="#fff" fill="none" stroke-width="1.500"/></svg>
      <svg viewBox="0 0 14 14"><path d="M2 3h9v6H2zM1 3v10" fill="none" stroke="#fff" stroke-width="1.500"/><path d="M6 6l6 6M12 6l-6 6" stroke="#e22c2c" stroke-width="2"/></svg>
      <svg viewBox="0 0 14 14"><path d="M1 5h3l4-4v12L4 9H1z" fill="#fff"/><circle cx="10" cy="9" r="3.500" fill="#fff" stroke="#e22c2c" stroke-width="1.500"/><path d="M8 7l4 4" stroke="#e22c2c" stroke-width="1.500"/></svg>
      <time>19:32<br>27-03-2014</time>
      <button class="desk" aria-label="Show desktop"></button>
    </div>
  </footer>
</body>
</html>
```
FILE: styles.css
```css
* {
  box-sizing: border-box;
}
body {
  margin: 0;
  height: 100vh;
  display: flex;
  flex-direction: column;
  font-family: "Open Sans", "Noto Sans", sans-serif;
  font-size: 8px;
  line-height: 10px;
  color: #14161a;
  background: #fff;
  overflow: hidden;
}
.sprite {
  position: absolute;
  width: 0;
  height: 0;
}
a {
  color: inherit;
  text-decoration: none;
}
button {
  font: inherit;
  color: inherit;
  border: 0;
  padding: 0;
  background: none;
}
svg {
  width: 12px;
  height: 12px;
  flex: none;
}
.ico {
  display: flex;
  align-items: center;
  justify-content: center;
  width: 16px;
  height: 14px;
}
.ico.drop {
  width: 25px;
  gap: 4px;
}
.caret, .drop::after {
  content: "";
  border: 2px solid transparent;
  border-top-color: #222;
  border-bottom: 0;
}
.caret.up {
  border-top: 0;
  border-bottom: 2px solid #222;
}

/* title bar */
.titlebar {
  display: flex;
  align-items: center;
  height: 21px;
  flex: none;
  background: #d6dae0;
  border-bottom: 2px solid #77797d;
}
.brand {
  display: flex;
  align-items: center;
  gap: 3px;
  align-self: stretch;
  width: 92px;
  padding-left: 3px;
  border-left: 4px solid #d8261c;
  background: linear-gradient(#414a52, #20262c);
  color: #fff;
  font-family: Lato, sans-serif;
  font-size: 10px;
  font-style: italic;
}
.ds {
  width: 14px;
  height: 16px;
}
.menu {
  display: flex;
  align-items: center;
  gap: 11px;
  align-self: stretch;
  padding: 0 2px 0 13px;
  background: linear-gradient(#b9bbbf, #a6a8ab);
  border-right: 1px solid #8c8e92;
}
.menu .ico {
  width: 14px;
  margin-left: -4px;
}
.quick {
  display: flex;
  align-items: center;
}
.select svg {
  width: 14px;
  height: 16px;
  background: #bfc2c7;
  border: 1px solid #666;
}
.doc-name {
  margin: 0 auto;
}
.search {
  display: flex;
  align-items: center;
  gap: 3px;
  width: 142px;
  height: 16px;
  padding: 0 3px;
  background: #eef1f5;
  border: 1px solid #55585c;
}
.search input {
  flex: 1;
  min-width: 0;
  border: 0;
  padding: 0;
  font: inherit;
  background: none;
}
.search input::placeholder {
  color: #5c5f64;
}
.win {
  display: flex;
  padding-left: 3px;
}

/* ribbon */
.ribbon {
  display: flex;
  flex: none;
  height: 53px;
  padding: 1px 0 3px;
  background: #d6dae0;
  border-bottom: 2px solid #77797d;
}
.group {
  display: flex;
  border-right: 1px solid #808388;
}
.group:last-child {
  border-right: 0;
}
.col {
  display: flex;
  flex-direction: column;
  justify-content: space-around;
}
.col .ico {
  width: 17px;
}
.col .ico.drop {
  width: 27px;
}
.on {
  background: #a9acb1;
  border: 1px solid #666;
}
.wizard {
  flex-direction: column;
  justify-content: space-around;
  width: 75px;
  padding-left: 4px;
}
.wizard button {
  display: flex;
  align-items: center;
  gap: 4px;
  white-space: nowrap;
}
.big {
  display: flex;
  flex-direction: column;
  align-items: center;
  width: 46px;
  padding-top: 7px;
}
.big svg {
  width: 14px;
}
.big.small {
  width: 38px;
}
.big.run {
  width: 21px;
}
.big.top {
  padding-top: 2px;
}
.big .caret {
  margin-top: 7px;
}
.big.load {
  width: 54px;
  background: #a4a7ab;
  border: 1px solid #6c6e72;
}

/* command tabs */
.tabrow {
  display: flex;
  height: 14px;
  flex: none;
  z-index: 1;
}
.tabs {
  display: flex;
  flex: none;
  padding-left: 1px;
  background: #a2a4a8;
}
.tabs a {
  padding: 0 5px;
  line-height: 12px;
  border-right: 1px solid #55575b;
  border-bottom: 1px solid #55575b;
}
.tabs .active {
  background: #dfe3e8;
  border-bottom: 0;
  font-weight: bold;
}
.hud {
  display: flex;
  align-items: center;
  height: 18px;
  margin-left: 93px;
}
.docwin {
  margin-left: auto;
  padding-right: 4px;
}

/* feature panel */
main {
  display: flex;
  flex: 1;
  min-height: 0;
}
.panel {
  position: relative;
  width: 166px;
  flex: none;
  border-top: 4px solid #a4a7b8;
  border-right: 1px solid #44464c;
  background: #e2e6ea;
}
.fm-tabs {
  display: flex;
  margin-top: 2px;
  border-bottom: 1px solid #44464c;
}
.fm-tabs button {
  width: 20px;
  height: 15px;
  display: flex;
  align-items: center;
  justify-content: center;
  background: #9fa1a6;
  border: 1px solid #44464c;
  border-left: 0;
  border-bottom: 0;
}
.fm-tabs .active {
  background: #e2e6ea;
}
.splitter {
  display: flex;
  justify-content: center;
  height: 4px;
  margin: 3px 1px 0 0;
  background: #9295a8;
}
.splitter span {
  display: flex;
  justify-content: center;
  gap: 2px;
  width: 20px;
  background: #e2e6ea;
}
.splitter i {
  border: 2px solid transparent;
  border-top-color: #33407c;
}
.tree {
  display: grid;
  grid-auto-rows: 1fr;
  min-height: 228px;
  margin: 0;
  padding: 0 0 0 2px;
  list-style: none;
}
.tree li {
  position: relative;
  display: flex;
  align-items: center;
  gap: 4px;
}
.d1 {
  padding-left: 16px;
}
.d2 {
  padding-left: 32px;
}
.d3 {
  padding-left: 48px;
}
/* connector lines */
.tree li::before {
  position: absolute;
  top: -6px;
  width: 10px;
  height: 13px;
  border-left: 1px solid #a2a6ac;
  border-bottom: 1px solid #a2a6ac;
}
.tree .d1::before, .tree .d2::before, .tree .d3::before {
  content: "";
}
.tree .d1::before {
  left: 6px;
}
.tree .d2::before {
  left: 22px;
}
.tree .d3::before {
  left: 38px;
}
.d3::after {
  content: "";
  position: absolute;
  left: 22px;
  top: -6px;
  height: 18px;
  border-left: 1px solid #a2a6ac;
}
.tog {
  position: absolute;
  left: 3px;
  width: 7px;
  height: 7px;
  border: 1px solid #a3abba;
  background: #f4f6f8;
  color: #3a4a70;
  line-height: 5px;
  font-size: 6px;
}
.d2 .tog {
  left: 19px;
}
.handle {
  position: absolute;
  right: -6px;
  top: 175px;
  width: 6px;
  height: 28px;
  display: flex;
  flex-direction: column;
  align-items: center;
  justify-content: space-evenly;
  border: 1px solid #44464c;
  border-left: 0;
  background: #e2e6ea;
}
.handle i {
  border: 2px solid transparent;
  border-left: 0;
  border-right-color: #222;
}

/* graphics area */
.viewport {
  position: relative;
  flex: 1;
  display: flex;
  align-items: flex-start;
  padding: 42px 136px 0 151px;
  font-family: "Liberation Sans", Arial, sans-serif;
}
.legend {
  width: 100px;
  padding-top: 2px;
  font-size: 9px;
  white-space: nowrap;
}
.scale {
  display: flex;
  height: 156px;
}
.bar {
  width: 14px;
  border: 1px solid #444;
  background: linear-gradient(#f00 0 5%, #ff1e00 8%, #ff8c00 17%, #ff0 29%, #8f0 41%, #0f0 50%, #0fa 60%, #0ff 71%, #08f 82%, #00f 94%);
}
.scale ol {
  display: flex;
  flex-direction: column;
  justify-content: space-between;
  margin: 0;
  padding: 3px 0 2px;
  list-style: none;
}
.scale li {
  display: flex;
  align-items: center;
  gap: 6px;
}
.scale li::before {
  content: "";
  width: 3px;
  border-top: 1px solid #444;
}
.legend p {
  margin: 0;
}
.legend .first {
  margin-top: 10px;
}
.legend .dim {
  color: #8c8c8c;
}
.plot {
  flex: 1;
  min-width: 0;
  height: auto;
}
.rings {
  color: #ff3210;
  fill: #b4ff0c;
}
.origin text, .triad text {
  font-size: 8px;
}
.origin text {
  fill: #0c3c50;
}
.triad {
  position: absolute;
  left: 21px;
  bottom: 33px;
  width: 34px;
  height: 38px;
  overflow: visible;
}
.taskpane {
  position: absolute;
  right: 0;
  top: 28px;
  width: 17px;
  border-left: 1px solid #44464c;
}
.taskpane button {
  display: flex;
  align-items: center;
  justify-content: center;
  width: 100%;
  height: 17px;
  background: #b9bbbf;
  border-top: 1px solid #44464c;
}
.taskpane button:first-child {
  background: #e6e9ed;
}

/* sheet tabs and status bar */
.sheets {
  display: flex;
  flex: none;
  height: 11px;
  border-top: 1px solid #44464c;
  background: #e2e6ea;
}
.sheets button {
  padding: 0 7px;
  border-right: 1px solid #44464c;
  background: #a2a4a8;
  line-height: 9px;
}
.sheets .nav {
  width: 12px;
  padding: 0;
  font-size: 6px;
  color: #85878b;
  border-right-color: #85878b;
}
.sheets .active {
  background: #e2e6ea;
  font-weight: bold;
}
.status {
  display: flex;
  align-items: center;
  gap: 13px;
  flex: none;
  height: 14px;
  padding: 0 4px 0 1px;
  border-top: 2px solid #77797d;
  background: #d6d9de;
}
.edition {
  margin-right: auto;
}
.units {
  display: flex;
  align-items: center;
  gap: 12px;
  margin-left: 24px;
}
.q {
  width: 9px;
  border: 1px solid #3a78a8;
  background: #fff;
  color: #1b9a2a;
  font-weight: bold;
  line-height: 8px;
  text-align: center;
}
.status svg {
  margin-left: 23px;
}

/* windows taskbar */
.taskbar {
  display: flex;
  align-items: stretch;
  gap: 2px;
  flex: none;
  height: 27px;
  background: linear-gradient(100deg, #6b4444, #82605d 45%, #7a5553 70%, #4f3234 80%, #5a3a3c);
  border-top: 1px solid #3e2a2b;
}
.taskbar > button {
  display: flex;
  align-items: center;
  justify-content: center;
  width: 42px;
}
.taskbar > button svg {
  width: 22px;
  height: 22px;
}
.taskbar .start {
  width: 39px;
}
.taskbar .start svg {
  width: 26px;
  height: 26px;
}
.taskbar .open {
  background: linear-gradient(135deg, #b9a19f, #7e5f5e);
  border: 1px solid #a89392;
}
.taskbar .current {
  background: linear-gradient(135deg, #d8c6c5, #a08886);
}
.taskbar text {
  fill: #fff;
  font: bold 11px "Liberation Sans", Arial, sans-serif;
}
.tray {
  display: flex;
  align-items: center;
  gap: 5px;
  margin-left: auto;
  color: #fff;
}
.tray .wide {
  width: 22px;
  height: 14px;
}
.tray .caret {
  border-width: 3px;
  border-top: 0;
  border-bottom-color: #fff;
}
.tray time {
  padding: 0 5px 0 7px;
  line-height: 12px;
  text-align: center;
}
.desk {
  align-self: stretch;
  width: 9px;
  border: 1px solid #8b7272;
  background: #5c4040;
}
```
